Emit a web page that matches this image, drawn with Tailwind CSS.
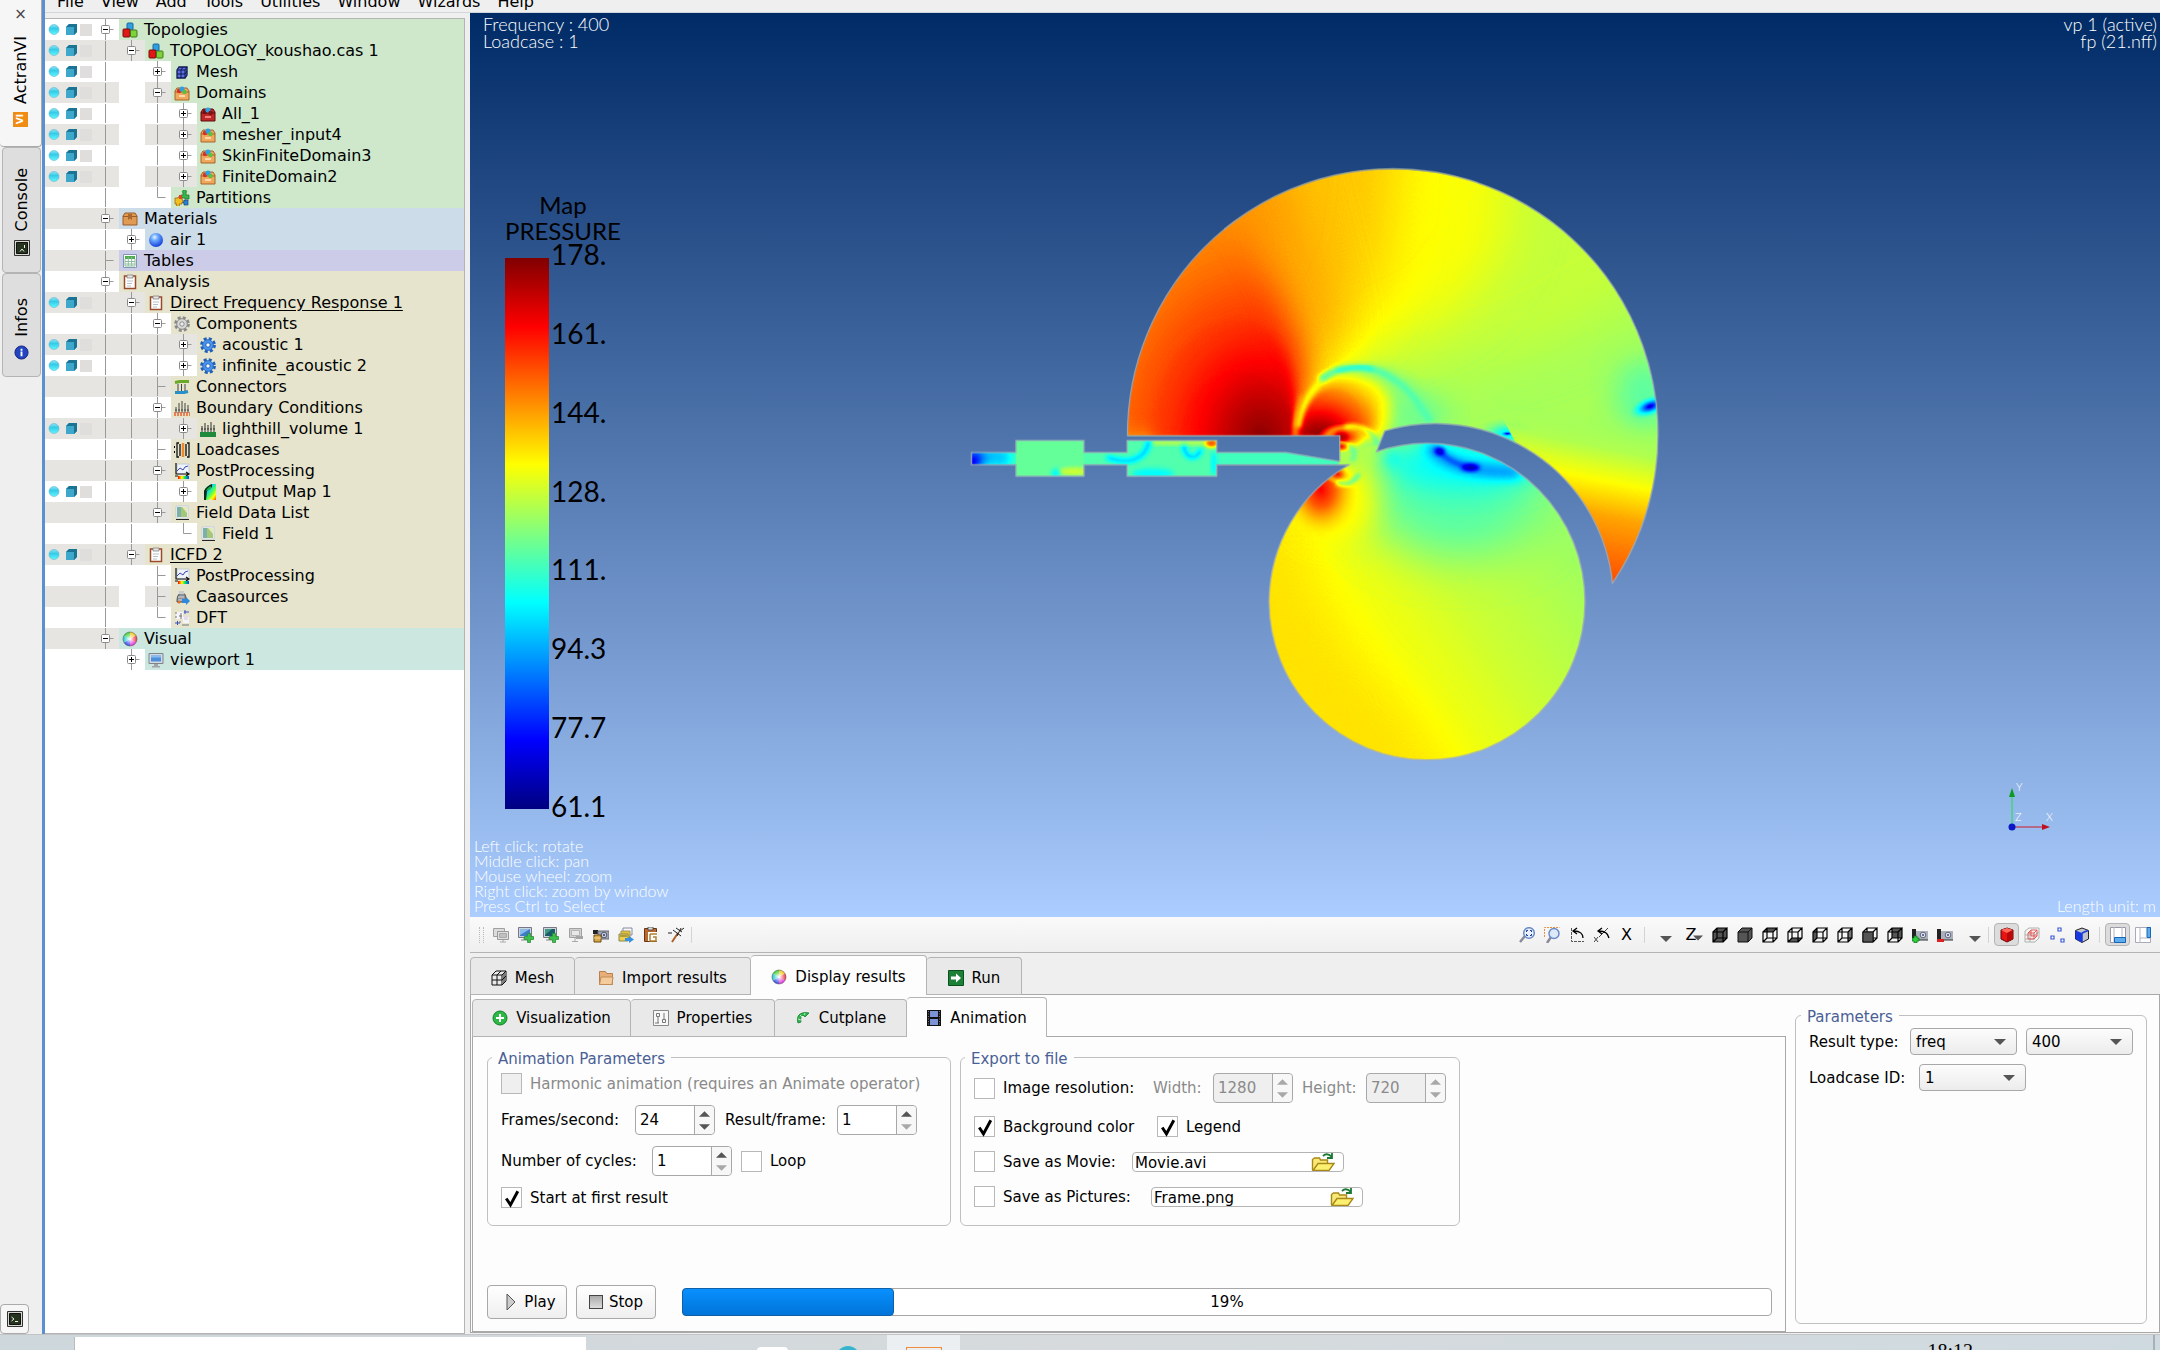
<!DOCTYPE html>
<html lang="en">
<head>
  <meta charset="utf-8" />
  <title>ActranVI</title>
  <meta name="viewport" content="width=device-width, initial-scale=1" />
  <script src="https://cdn.jsdelivr.net/npm/@tailwindcss/browser@4"></script>
</head>
<body class="h-screen flex flex-col overflow-hidden bg-[#efefef] text-black text-[15px] leading-5 font-['DejaVu_Sans',sans-serif]">

<!-- icon sprite -->
<svg class="absolute size-0" aria-hidden="true">
  <defs>
    <radialGradient id="gSphere" cx=".4" cy=".3" r=".7"><stop offset="0" stop-color="#e8f4ff"/><stop offset=".35" stop-color="#6aa8ff"/><stop offset="1" stop-color="#1440d8"/></radialGradient>
    <radialGradient id="gWhite" cx=".5" cy=".5" r=".5"><stop offset="0" stop-color="#fff"/><stop offset=".3" stop-color="#fff" stop-opacity=".7"/><stop offset="1" stop-color="#fff" stop-opacity="0"/></radialGradient>
    <linearGradient id="gCyan" x1="0" y1="0" x2="0" y2="1"><stop offset="0" stop-color="#8fe4f4"/><stop offset=".4" stop-color="#35cbe8"/><stop offset="1" stop-color="#5ff6ff"/></linearGradient>
    <linearGradient id="gRainbow" x1="0" y1="0" x2="1" y2="0"><stop offset="0" stop-color="#f00"/><stop offset=".35" stop-color="#ff0"/><stop offset=".65" stop-color="#0d6"/><stop offset="1" stop-color="#04f"/></linearGradient>
    <linearGradient id="gMap" x1="0" y1="0" x2="1" y2="1"><stop offset="0" stop-color="#0a2"/><stop offset=".35" stop-color="#0cf"/><stop offset=".6" stop-color="#5f5"/><stop offset=".8" stop-color="#ff0"/><stop offset="1" stop-color="#f40"/></linearGradient>
  </defs>
  <symbol id="blocks" viewBox="0 0 16 16"><rect x="5" y="1" width="6" height="7" rx="1" fill="#2f9fe0" stroke="#1668a0"/><rect x="1" y="7" width="7" height="8" rx="1" fill="#e01818" stroke="#7a0c0c"/><rect x="8.500" y="8" width="6.500" height="7" rx="1" fill="#7fd23a" stroke="#3c7a18"/></symbol>
  <symbol id="mesh" viewBox="0 0 16 16"><path d="M3 6l2-3h8v8l-2 3H3z" fill="#5a70e0" stroke="#101850" stroke-width="1.300"/><path d="M3 6h8l2-3M11 6v8M7 6v8M3 10h8l2-3M7 6l2-3" fill="none" stroke="#101850"/></symbol>
  <symbol id="box" viewBox="0 0 16 16"><path d="M1 6l2-3h10l2 3v9H1z" fill="#f0a85c" stroke="#a8642a"/><path d="M1 7h14" stroke="#a8642a"/><circle cx="5" cy="6" r="2.200" fill="#d83020"/><circle cx="8" cy="4" r="2.600" fill="#2f9fe0"/><circle cx="10.500" cy="7" r="2.200" fill="#5cc040"/><path d="M5 11h6" stroke="#ffd9a8" stroke-width="2"/></symbol>
  <symbol id="boxred" viewBox="0 0 16 16"><path d="M1 6l2-3h10l2 3v9H1z" fill="#c02828" stroke="#5c0c0c"/><path d="M1 7h14" stroke="#5c0c0c"/><circle cx="5" cy="6" r="2.200" fill="#701010"/><circle cx="8" cy="4" r="2.600" fill="#2f9fe0"/><circle cx="10.500" cy="7" r="2.200" fill="#801414"/><path d="M5 11h6" stroke="#f08080" stroke-width="2"/></symbol>
  <symbol id="puzzle" viewBox="0 0 16 16"><path d="M7 5h2V3a2 2 0 1 1 3 0v2h3v4h-4V8H7z" fill="#35b84a" stroke="#1a6a28" stroke-width=".7"/><path d="M1 8h3V7h4v3h1v2H8v2H5a1.500 1.500 0 1 1-2 0H1z" fill="#f0c020" stroke="#9a5a10" stroke-width=".7"/><path d="M10 10h4v5h-4v-2H9v-1h1z" fill="#2880d0" stroke="#144880" stroke-width=".7"/><path d="M5 5h3v4H5z" fill="#d84828"/></symbol>
  <symbol id="package" viewBox="0 0 16 16"><path d="M1 5l2-3h10l2 3v9H1z" fill="#e09a54" stroke="#9a5c28"/><path d="M1 5.500h14" stroke="#9a5c28"/><path d="M6 3h4v6l-2-1.500L6 9z" fill="#a86830"/></symbol>
  <symbol id="sphere" viewBox="0 0 16 16"><circle cx="8" cy="8" r="7" fill="url(#gSphere)"/></symbol>
  <symbol id="table" viewBox="0 0 16 16"><path d="M1.500 1.500h13v13h-13z" fill="#fff" stroke="#7c98b4"/><path d="M3 3h10v3H3z" fill="#4cae4c"/><path d="M3 6v7h10V6M3 8.500h10M3 11h10M6.300 4v9M9.600 4v9" fill="none" stroke="#8cbc9c"/></symbol>
  <symbol id="clip" viewBox="0 0 16 16"><path d="M2.500 2h11v12.500h-11z" fill="#fff" stroke="#9a4a28" stroke-width="1.500"/><path d="M5 1h6v3H5z" fill="#e4e4e4" stroke="#777" stroke-width=".7"/><path d="M5 7h6M5 9.500h5M5 12h4" stroke="#b4c0c8"/></symbol>
  <symbol id="gear" viewBox="0 0 16 16"><circle cx="8" cy="8" r="6.500" fill="none" stroke="#8a8a8a" stroke-width="2.800" stroke-dasharray="3 2.100"/><circle cx="8" cy="8" r="5.300" fill="#d8d8d8" stroke="#8a8a8a"/><circle cx="8" cy="8" r="2.200" fill="#eee" stroke="#8a8a8a"/></symbol>
  <symbol id="gearblue" viewBox="0 0 16 16"><circle cx="8" cy="8" r="6.500" fill="none" stroke="#1f5fb8" stroke-width="2.800" stroke-dasharray="3 2.100"/><circle cx="8" cy="8" r="5.300" fill="#4a94ec" stroke="#2a6cc8"/><circle cx="8" cy="8" r="2.200" fill="#fff" stroke="#1f5fb8"/></symbol>
  <symbol id="conn" viewBox="0 0 16 16"><path d="M1 3.500l5-1h9" fill="none" stroke="#6aa828" stroke-width="3"/><path d="M1 13.500h9l4-1" fill="none" stroke="#2890c8" stroke-width="3"/><path d="M4 5v7M7.500 5v7M11 5v7" stroke="#444"/></symbol>
  <symbol id="bc" viewBox="0 0 16 16"><path d="M2 7v6M5 3v10M8 1v12M11 3v10M14 5v8" stroke="#444"/><path d="M1 10h2M4 10h2M7 10h2M10 10h2M13 10h2" stroke="#444"/><path d="M0 13h16M0 15h16" stroke="#e8602c" stroke-width="1.500" stroke-dasharray="2 1"/></symbol>
  <symbol id="light" viewBox="0 0 16 16"><path d="M0 11h16v5H0z" fill="#1f8a3c"/><path d="M2 5v6M5 2v9M8 4v7M11 1v10M14 4v7" stroke="#333"/><path d="M1 8h2M4 8h2M7 8h2M10 8h2M13 8h2" stroke="#333"/></symbol>
  <symbol id="load" viewBox="0 0 16 16"><path d="M0 5h1M0 10h1" stroke="#000" stroke-width="2"/><path d="M5 1H3v14h2M13 1h2v14h-2" fill="none" stroke="#111" stroke-width="1.300"/><path d="M6 2v12M12 2v12" stroke="#555" stroke-width="2"/><path d="M9 1v14" stroke="#f08828" stroke-width="2.500"/></symbol>
  <symbol id="post" viewBox="0 0 16 16"><path d="M3 1h12v10H3z" fill="#eef2fa" stroke="#b0b8c8" stroke-width=".6"/><path d="M2 0v11h13M1 13h3M12 9l3 2-3 2" fill="none" stroke="#111" stroke-width="1.200"/><path d="M3 8l3-3 3 2 2-3 3-1" fill="none" stroke="#3848b0"/><path d="M4 13h11v3H4z" fill="url(#gRainbow)"/></symbol>
  <symbol id="map" viewBox="0 0 16 16"><path d="M4 7c2-4 5-6 8-7h4v16h-4c-1-3-3 0-4 0H4z" fill="url(#gMap)"/><path d="M4 7c2-4 5-6 8-7v3L7 7l-1 9H4z" fill="#0a2a18"/><path d="M6 7c1-3 3-4 5-5v3z" fill="#18b040"/></symbol>
  <symbol id="field" viewBox="0 0 16 16"><path d="M2 1h12v12H2z" fill="#fff" stroke="#c4ccd8"/><path d="M3 2h10v10H3z" fill="#a4c878"/><path d="M3 2h4v10H3z" fill="#7cb0a8"/><path d="M8 2h5v6z" fill="#e4eab4"/><path d="M2 14.500h13" stroke="#222"/></symbol>
  <symbol id="caa" viewBox="0 0 16 16"><path d="M3 13c0-5 1-8 4-9s5 2 5 6l-2 3z" fill="#8e9298" stroke="#4a4e54"/><path d="M5 2h5v3H5z" fill="#c8ccd0"/><path d="M4 8h6M4 11h6" stroke="#d8dce0"/><circle cx="5" cy="13" r="1.500" fill="#e07030"/><path d="M8 10h4V8l4 4-4 4v-2H8z" fill="#2f88dc"/></symbol>
  <symbol id="dft" viewBox="0 0 16 16"><path d="M2 2h7v7H2zM9 7h6v6H9z" fill="#f4f4fa"/><path d="M2 2v2M2 6v2M7 3v6M5 6h3M6 11v2M8 15h7" stroke="#777"/><path d="M10 2h3M11 0v4M13 2h2M1 13h5M3.500 11v4" stroke="#3850c0"/><path d="M10 6h4v4h-4z" fill="#e4dce4"/></symbol>
  <symbol id="wheel" viewBox="0 0 16 16"><path d="M8 8L8 1A7 7 0 0 1 14.100 4.500z" fill="#f4c818"/><path d="M8 8L14.100 4.500A7 7 0 0 1 14.100 11.500z" fill="#f03848"/><path d="M8 8L14.100 11.500A7 7 0 0 1 8 15z" fill="#e030d8"/><path d="M8 8L8 15A7 7 0 0 1 1.900 11.500z" fill="#3048e8"/><path d="M8 8L1.900 11.500A7 7 0 0 1 1.900 4.500z" fill="#20c8d0"/><path d="M8 8L1.900 4.500A7 7 0 0 1 8 1z" fill="#38d038"/><circle cx="8" cy="8" r="7" fill="url(#gWhite)" stroke="#666" stroke-width=".6"/></symbol>
  <symbol id="monitor" viewBox="0 0 16 16"><path d="M1 1.500h14v10H1z" fill="#d4d8e0" stroke="#7c848c"/><path d="M3 3.500h10v6H3z" fill="#4c90dc"/><path d="M3 3.500h10v2H3z" fill="#8cbcf0"/><path d="M6 12h4v2h2v1.500H4V14h2z" fill="#a0a4a8"/></symbol>
  <symbol id="console" viewBox="0 0 16 16"><path d="M.5.5h15v15H.5z" fill="#d8d8d0" stroke="#333"/><path d="M2.500 2.500h11v11h-11z" fill="#26331f" stroke="#111"/><path d="M4.500 6l2.500 2-2.500 2M8 10.500h3" fill="none" stroke="#e8f0e0"/></symbol>

  <!-- viewport toolbar -->
  <symbol id="mons" viewBox="0 0 16 16"><path d="M.5 1.500h11v8H.5z" fill="#dcdcdc" stroke="#a0a0a0"/><path d="M4.500 4.500h11v8h-11z" fill="#e0e0e0" stroke="#999"/><path d="M6.500 6.500h7v4h-7z" fill="#c0c0c0" stroke="#aaa"/><path d="M7 15h6M10 13v2" stroke="#aaa"/></symbol>
  <symbol id="monadd" viewBox="0 0 16 16"><path d="M.5.5h13v10H.5z" fill="#ccd4dc" stroke="#778"/><path d="M2 2h10v7H2z" fill="#3c7cc8"/><path d="M2 2h10L2 8z" fill="#8cbcec"/><path d="M3 13h6M6 11v2" stroke="#888"/><path d="M9.500 6.500h3v3h3v3h-3v3h-3v-3h-3v-3h3z" fill="#3cc04c" stroke="#289038" stroke-width=".8"/></symbol>
  <symbol id="monadd2" viewBox="0 0 16 16"><path d="M.5.5h13v10H.5z" fill="#ccd4dc" stroke="#778"/><path d="M2 2h10v7H2z" fill="#1c5c68"/><path d="M2 2h7L2 8z" fill="#3c9c88"/><path d="M3 13h6M6 11v2" stroke="#888"/><path d="M9.500 6.500h3v3h3v3h-3v3h-3v-3h-3v-3h3z" fill="#3cc04c" stroke="#289038" stroke-width=".8"/></symbol>
  <symbol id="mondel" viewBox="0 0 16 16"><path d="M1.500 1.500h12v9h-12z" fill="#d0d0d0" stroke="#a0a0a0"/><path d="M3.500 3.500h8v5h-8z" fill="#e8e8e8" stroke="#b4b4b4"/><path d="M4 14.500h6M7 11v3" stroke="#aaa"/><path d="M8 9h7v3H8z" fill="#a4a4a4"/></symbol>
  <symbol id="cam" viewBox="0 0 16 16"><path d="M0 3h5v4H0z" fill="#222"/><path d="M5 4h11v8H5z" fill="#9ca4b4" stroke="#667"/><circle cx="11" cy="8" r="2.800" fill="#c8d0e8" stroke="#556"/><circle cx="11" cy="8" r="1" fill="#335"/><path d="M1 8h7v7H1z" fill="#d8a848" stroke="#6a4a10"/><path d="M1 11h7" stroke="#f4d898"/></symbol>
  <symbol id="copyimg" viewBox="0 0 16 16"><path d="M5 1h9v7H5z" fill="#f8f8f8" stroke="#88a"/><path d="M3 4h9v7H3z" fill="#e8c030" stroke="#996"/><path d="M1 7h9v7H1z" fill="#f0d048" stroke="#885"/><path d="M2 9h7" stroke="#6a6a20"/><path d="M7 11h4V9l5 3.500L11 16v-2H7z" fill="#3890e0"/></symbol>
  <symbol id="paste" viewBox="0 0 16 16"><path d="M1.500 1.500h12v13h-12z" fill="#b86a30" stroke="#6c3410"/><path d="M5 0h5v3H5z" fill="#ddd" stroke="#444" stroke-width=".8"/><path d="M5 5h9v9H5z" fill="#fff"/><path d="M7 7h7M7 7v7h6v-4h-3" fill="none" stroke="#b08030" stroke-width="1.500"/></symbol>
  <symbol id="probe" viewBox="0 0 16 16"><path d="M4 15l6-9" stroke="#b06028" stroke-width="2"/><path d="M0 6h4M5 3l8 6M8 1l6 4M9 9l4-8M12 4l4-3" stroke="#222"/></symbol>
  <symbol id="zoomfit" viewBox="0 0 16 16"><path d="M1 15l5-6" stroke="#889" stroke-width="2.400"/><circle cx="10" cy="6" r="5.300" fill="#e8f0ff" stroke="#6a8cc8" stroke-width="1.500"/><path d="M7.500 5V3.500H9M11 3.500h1.500V5M12.500 7v1.500H11M9 8.500H7.500V7" fill="none" stroke="#203c90"/></symbol>
  <symbol id="zoombox" viewBox="0 0 16 16"><path d="M.5 10V.5h15" fill="none" stroke="#e89040" stroke-dasharray="2 1"/><path d="M3 16l4-6" stroke="#889" stroke-width="2.400"/><circle cx="10" cy="6.500" r="5" fill="#dde8f8" stroke="#6a8cc8" stroke-width="1.500"/></symbol>
  <symbol id="axrot" viewBox="0 0 16 16"><path d="M2.500 1v13.500H15" fill="none" stroke="#555" stroke-dasharray="3 1"/><path d="M14 11c0-4-3-7-9-7M8 1L4 4l4 3" fill="none" stroke="#000" stroke-width="1.300"/></symbol>
  <symbol id="xrot" viewBox="0 0 16 16"><path d="M0 10l4 5M4 10l-4 5M5 10l9-9" stroke="#444"/><path d="M15 11c-1-5-4-7-10-7M8 1L4 4l4 3" fill="none" stroke="#000" stroke-width="1.300"/></symbol>
  <symbol id="cube" viewBox="0 0 16 16"><path d="M1 5h10v10H1zM1 5l4-4h10l-4 4M15 1v10l-4 4M5 1v10h10M5 11l-4 4" fill="none" stroke="#000" stroke-width="1.200"/></symbol>
  <symbol id="camadd" viewBox="0 0 16 16"><path d="M0 2h4v10H0z" fill="#222"/><path d="M4 4h12v9H4z" fill="#aab0bc"/><path d="M4 13h12" stroke="#333"/><circle cx="11" cy="8" r="2.800" fill="#dde4f4" stroke="#667"/><circle cx="11" cy="8" r="1" fill="#447"/><path d="M2 9h3v2h2v3H5v2H2v-2H0v-3h2z" fill="#2cd03c" stroke="#0c6c18" stroke-width=".7"/></symbol>
  <symbol id="camdel" viewBox="0 0 16 16"><path d="M0 2h4v10H0z" fill="#222"/><path d="M4 4h12v9H4z" fill="#aab0bc"/><path d="M4 13h12" stroke="#333"/><circle cx="11" cy="8" r="2.800" fill="#dde4f4" stroke="#667"/><circle cx="11" cy="8" r="1" fill="#447"/><path d="M0 12h7v3H0z" fill="#e02020"/></symbol>
  <symbol id="redcube" viewBox="0 0 16 16"><path d="M8 1l6 2v9l-6 3-6-3V3z" fill="#e81414" stroke="#5c0808"/><path d="M8 1l6 2-6 3-6-3z" fill="#ff6a5a"/><path d="M8 6l6-3v9l-6 3z" fill="#b80808"/></symbol>
  <symbol id="wirecube" viewBox="0 0 16 16"><path d="M1 4l4-3h10v10l-4 4H1zM1 8h10l4-3M6 4v11M1 12h10" fill="none" stroke="#a8b4b0"/><path d="M4 6h6v6H4zM4 6l3-3h6v6l-3 3M10 6l3-3M7 3v6h6" fill="none" stroke="#e85858"/></symbol>
  <symbol id="points" viewBox="0 0 16 16"><path d="M9 1h3v3H9zM2 9h3v3H2zM12 12h3v3h-3z" fill="#fff" stroke="#3c58d8" stroke-width="1.200"/></symbol>
  <symbol id="bluecube" viewBox="0 0 16 16"><path d="M8 1l6.500 2.500V12L8 15.500 1.500 12V3.500z" fill="#c0c4c8" stroke="#222"/><path d="M1.500 3.500L8 6v9.500L1.500 12z" fill="#1838e0"/><path d="M8 6l6-2.500M8 6v9" stroke="#1838e0" stroke-width="1.500"/></symbol>
  <symbol id="paneb" viewBox="0 0 16 16"><path d="M.5.5h15v15H.5z" fill="#fff" stroke="#99a"/><path d="M4 0v16M12 0v10" stroke="#b4b8c4"/><path d="M4.500 10.500h11v5h-11z" fill="#5cacf0" stroke="#1c64b0"/></symbol>
  <symbol id="paner" viewBox="0 0 16 16"><path d="M.5.500h15v15H.5z" fill="#fff" stroke="#aab"/><path d="M5 0v16M5 11h10" stroke="#b4b8c4"/><path d="M12 .5h3.500v10H12z" fill="#5cacf0" stroke="#1c64b0"/></symbol>

  <!-- tabs and file fields -->
  <symbol id="meshtab" viewBox="0 0 16 16"><path d="M1 5h10v10H1zM1 5l4-4h10l-4 4M15 1v10l-4 4M6 5v10M1 10h10l4-4M6 5l4-4M13 3v10" fill="none" stroke="#111"/></symbol>
  <symbol id="folder" viewBox="0 0 16 16"><path d="M1.500 1.500h6l1 2h6v11h-13z" fill="#e8b078" stroke="#b8804c"/><path d="M3 7h12l-1 7.500H1.500z" fill="#f4cc9c" stroke="#c08c58"/></symbol>
  <symbol id="run" viewBox="0 0 16 16"><path d="M.5.500h15v15H.5z" fill="#1c8038" stroke="#0c5020"/><path d="M3 6.500h5V3.500l5 4.500-5 4.500v-3H3z" fill="#fff"/></symbol>
  <symbol id="plus" viewBox="0 0 16 16"><circle cx="8" cy="8" r="7" fill="#2cb844" stroke="#128028"/><path d="M8 4v8M4 8h8" stroke="#fff" stroke-width="2"/></symbol>
  <symbol id="props" viewBox="0 0 16 16"><path d="M.5.500h15v15H.5z" fill="#f8f8f8" stroke="#888"/><path d="M3.500 3.500h3v3h-3zM5 7v6M11 3v6M9.500 9.500h3v3h-3zM2 13h4" fill="none" stroke="#777"/></symbol>
  <symbol id="cut" viewBox="0 0 16 16"><path d="M3 13C1 7 4 1 14 3L10 7 8 5c-2 1-3 4-2 7z" fill="#30b84c" stroke="#187830" stroke-width=".8"/><path d="M3 9l3 1M5 5l2 2M10 3l-1 2" stroke="#b8ecc0"/></symbol>
  <symbol id="film" viewBox="0 0 16 16"><path d="M1 0h14v16H1z" fill="#111"/><path d="M4 1h8v6H4zM4 9h8v6H4z" fill="#7c94d4"/><path d="M2.500 1v15M13.500 1v15" stroke="#778" stroke-dasharray="1 1.500"/></symbol>
  <symbol id="open" viewBox="0 0 24 18"><path d="M1.500 17V6.500l2-1.500h5l1 2h7v4" fill="#f8e878" stroke="#a88818" stroke-width="1.400"/><path d="M2 17.500l5-7h16l-5 7z" fill="#fcf070" stroke="#a88818" stroke-width="1.400"/><path d="M12 3c3-3 6-2 9 1M21 0v5h-5" fill="none" stroke="#1a7a34" stroke-width="1.800"/></symbol>
  <symbol id="check" viewBox="0 0 20 20"><path d="M5 11l4 6L16 4" fill="none" stroke="#000" stroke-width="2.800"/></symbol>
  <symbol id="up" viewBox="0 0 12 6"><path d="M0 6L6 0l6 6z" fill="currentColor"/></symbol>
  <symbol id="down" viewBox="0 0 12 6"><path d="M0 0h12L6 6z" fill="currentColor"/></symbol>
</svg>

<div class="flex flex-1 min-h-0">
  <!-- dock tabs -->
  <nav class="w-[42px] shrink-0 flex flex-col">
    <button class="h-[147px] flex flex-col items-center border border-l-0 border-t-0 border-[#aaa] rounded-b bg-[#f6f6f6] pt-1">
      <span class="text-[#444]">×</span>
      <span class="[writing-mode:vertical-rl] rotate-180 mt-3 text-[16px]">ActranVI</span>
      <span class="grid place-items-center size-[15px] mt-2 bg-[#f08c14] text-white text-[9px] font-bold leading-3"><span class="-rotate-90">VI</span></span>
    </button>
    <button class="h-[126px] w-[39px] ml-[2px] flex flex-col items-center justify-end gap-2 pb-4 border border-[#b4b4b4] rounded bg-[#dedede]">
      <span class="[writing-mode:vertical-rl] rotate-180 text-[16px]">Console</span>
      <svg class="size-4 -rotate-90"><use href="#console"/></svg>
    </button>
    <button class="h-[104px] w-[39px] ml-[2px] flex flex-col items-center justify-end gap-2 pb-4 border border-[#b4b4b4] rounded bg-[#dedede]">
      <span class="[writing-mode:vertical-rl] rotate-180 text-[16px]">Infos</span>
      <svg class="size-[15px]" viewBox="0 0 16 16"><circle cx="8" cy="8" r="7" fill="#2344c0" stroke="#14247c"/><path d="M8 7v5M8 4v2" stroke="#fff" stroke-width="2"/></svg>
    </button>
    <button class="mt-auto w-[29px] h-[30px] grid place-items-center border border-[#aaa] rounded-sm bg-[#f6f6f6]" aria-label="Console"><svg class="size-4"><use href="#console"/></svg></button>
  </nav>

  <div class="flex-1 min-w-0 flex flex-col border-l-[3px] border-[#5a8fd0]">
    <header class="h-[13px] shrink-0 overflow-hidden flex items-end border-b border-[#cfd6dc] pl-3 gap-[17px] text-[16px]">
      <a href="#file">File</a><a href="#view">View</a><a href="#add">Add</a><a href="#tools">Tools</a><a href="#utilities">Utilities</a><a href="#window">Window</a><a href="#wizards">Wizards</a><a href="#help">Help</a>
    </header>

    <div class="flex-1 min-h-0 flex">
      <ul id="tree" class="w-[420px] shrink-0 mt-[5px] mr-[5px] bg-white border-t border-r border-b border-[#b4b4b4] text-[16px]"></ul>

      <main class="flex-1 min-w-0 flex flex-col">
        <!-- 3D viewport -->
        <section class="relative flex-1 min-h-0 flex items-center justify-center bg-linear-to-b from-[#002b66] to-[#abcdff] overflow-hidden text-white text-[18px] leading-[17px] font-[Lato,sans-serif] font-light">
          <svg class="w-[720px] h-[630px]" viewBox="955 150 720 630">
            <defs>
              <path id="duct" d="M365 711A577.500 661 0 1 1 1421 1078A388 443 0 0 0 925 699L907 751A344 394 0 0 1 1017 730A344 394 0 0 1 1361 1124A344 394 0 0 1 1017 1518A344 394 0 0 1 673 1124A344 394 0 0 1 848 783H559V812H364V783H270V812H122V783H25V753H122V723H270V753H364V723H559V753H710L827 775V711Z"/>
              <clipPath id="cDuct"><use href="#duct"/></clipPath>
              <clipPath id="cDome"><path d="M300 0H1568V1100H1400L1230 790L1040 715L880 740L830 720V711H300Z"/></clipPath>
              <clipPath id="cLow"><path d="M600 1568V860L846 782L860 760L905 745L1040 715L1300 820L1400 1120V1568Z"/></clipPath>
              <!-- scalar field (grey) to rainbow -->
              <filter id="jet" x="0" y="0" width="1568" height="1568" filterUnits="userSpaceOnUse" color-interpolation-filters="sRGB">
                <feComponentTransfer>
                  <feFuncR type="table" tableValues="0 0 0 0 .5 1 1 1 .5"/>
                  <feFuncG type="table" tableValues="0 0 .5 1 1 1 .5 0 0"/>
                  <feFuncB type="table" tableValues=".5 1 1 1 .5 0 0 0 0"/>
                </feComponentTransfer>
              </filter>
              <filter id="b60" x="-50%" y="-50%" width="200%" height="200%" color-interpolation-filters="sRGB"><feGaussianBlur stdDeviation="60"/></filter>
              <filter id="b30" x="-50%" y="-50%" width="200%" height="200%" color-interpolation-filters="sRGB"><feGaussianBlur stdDeviation="32"/></filter>
              <filter id="b12" x="-50%" y="-50%" width="200%" height="200%" color-interpolation-filters="sRGB"><feGaussianBlur stdDeviation="13"/></filter>
              <filter id="b5" x="-50%" y="-50%" width="200%" height="200%" color-interpolation-filters="sRGB"><feGaussianBlur stdDeviation="5"/></filter>
              <radialGradient id="rMain" gradientUnits="userSpaceOnUse" cx="0" cy="0" r="1" gradientTransform="translate(655 715) scale(400 560)">
                <stop offset="0" stop-color="#fcfcfc"/><stop offset=".15" stop-color="#f0f0f0"/><stop offset=".3" stop-color="#e2e2e2"/><stop offset=".5" stop-color="#d3d3d3"/><stop offset=".75" stop-color="#c5c5c5"/><stop offset="1" stop-color="#bababa"/>
              </radialGradient>
              <radialGradient id="rLobe" gradientUnits="userSpaceOnUse" cx="0" cy="0" r="1" gradientTransform="translate(782 718) scale(175 175)">
                <stop offset="0" stop-color="#fff"/><stop offset=".22" stop-color="#f0f0f0"/><stop offset=".45" stop-color="#d6d6d6"/><stop offset=".7" stop-color="#bcbcbc"/><stop offset="1" stop-color="#9c9c9c"/>
              </radialGradient>
              <radialGradient id="rSpot"><stop offset="0" stop-color="#e0e0e0"/><stop offset=".35" stop-color="#c8c8c8"/><stop offset=".65" stop-color="#b0b0b0" stop-opacity=".8"/><stop offset="1" stop-color="#a0a0a0" stop-opacity="0"/></radialGradient>
              <radialGradient id="rCold"><stop offset="0" stop-color="#101010"/><stop offset=".3" stop-color="#404040"/><stop offset="1" stop-color="#787878" stop-opacity="0"/></radialGradient>
              <linearGradient id="lTail" gradientUnits="userSpaceOnUse" x1="1500" y1="680" x2="1410" y2="1080"><stop offset="0" stop-color="#868686" stop-opacity="0"/><stop offset=".2" stop-color="#8c8c8c"/><stop offset=".38" stop-color="#9e9e9e"/><stop offset=".6" stop-color="#b6b6b6"/><stop offset="1" stop-color="#cdcdcd"/></linearGradient>
              <linearGradient id="lLow" gradientUnits="userSpaceOnUse" x1="690" y1="1250" x2="1280" y2="900"><stop offset="0" stop-color="#a9a9a9"/><stop offset=".3" stop-color="#9f9f9f"/><stop offset=".6" stop-color="#939393"/><stop offset="1" stop-color="#888"/></linearGradient>
            </defs>
            <g transform="translate(960 150) scale(.4592 .4018)">
              <g clip-path="url(#cDuct)">
                <g filter="url(#jet)">
                  <rect width="1568" height="1568" fill="#8a8a8a"/>
                  <!-- upper volume -->
                  <g clip-path="url(#cDome)">
                    <path d="M300-200H1600L1500 350L1300 480L1050 560L800 640L600 800H200Z" fill="#919191" filter="url(#b60)"/>
                    <path d="M200-200H1200L1180 250L1080 400L900 500L780 600L735 720H200Z" fill="#9f9f9f" filter="url(#b60)"/>
                    <path d="M200-80H960L930 250L880 400L800 500L740 600L730 720H200Z" fill="#aeaeae" filter="url(#b60)"/>
                    <path d="M200 720V400L430 0L700 30L760 300L790 440L750 560L727 640V720Z" fill="#bababa" filter="url(#b60)"/>
                    <path d="M300 720V500L430 180L600 160L690 350L730 480L740 560L727 640V720Z" fill="url(#rMain)" filter="url(#b30)"/>
                    <path d="M420 720C430 520 520 440 610 430C700 440 735 560 726 720Z" fill="url(#rMain)" filter="url(#b12)"/>
                    <path d="M480 713C500 560 600 510 680 590C718 630 726 670 727 713Z" fill="url(#rMain)" filter="url(#b5)"/>
                    <ellipse cx="905" cy="670" rx="125" ry="130" fill="#848484" filter="url(#b12)"/>
                    <path d="M760 713C760 630 800 556 860 560C935 570 960 640 925 713Z" fill="#a2a2a2" filter="url(#b12)"/>
                    <path d="M733 713C742 630 770 575 830 572C895 580 930 640 890 713Z" fill="url(#rLobe)" filter="url(#b12)"/>
                    <path d="M737 713C750 640 775 600 820 600C870 610 880 660 860 713Z" fill="url(#rLobe)" filter="url(#b5)"/>
                    <path d="M735 690C741 630 775 565 860 520" fill="none" stroke="#9c9c9c" stroke-width="14" filter="url(#b5)"/>
                    <path d="M728 713C731 670 735 640 745 610" fill="none" stroke="#b4b4b4" stroke-width="8" filter="url(#b5)"/>
                    <path d="M785 572C830 532 900 530 950 575C990 605 1000 640 1025 675" fill="none" stroke="#747474" stroke-width="16" filter="url(#b5)"/>
                    <path d="M820 550C850 540 880 538 900 546" fill="none" stroke="#5c5c5c" stroke-width="6" filter="url(#b5)"/>
                    <ellipse cx="1010" cy="655" rx="50" ry="45" fill="#747474" opacity=".7" filter="url(#b30)"/>
                    <ellipse cx="1490" cy="610" rx="60" ry="90" fill="#767676" filter="url(#b30)"/>
                    <ellipse cx="1503" cy="638" rx="52" ry="28" fill="url(#rCold)" transform="rotate(-25 1503 638)"/>
                    <ellipse cx="1192" cy="706" rx="70" ry="42" fill="url(#rCold)" opacity=".45"/>
                    <ellipse cx="1192" cy="706" rx="20" ry="9" fill="url(#rCold)"/>
                    <path d="M1150 600H1568V1090H1380Z" fill="url(#lTail)"/>
                  </g>
                  <!-- lower volume -->
                  <g clip-path="url(#cLow)">
                    <rect x="600" y="700" width="800" height="868" fill="url(#lLow)"/>
                    <path d="M600 820L740 830L740 1000L760 1150L840 1300L960 1420L1050 1568H600Z" fill="#a6a6a6" filter="url(#b60)"/>
                    <ellipse cx="1080" cy="840" rx="190" ry="170" fill="#747474" filter="url(#b60)"/>
                    <ellipse cx="1100" cy="785" rx="160" ry="60" fill="#606060" filter="url(#b30)"/>
                    <ellipse cx="945" cy="770" rx="20" ry="22" fill="#646464" filter="url(#b12)"/>
                    <path d="M1020 735C1060 785 1110 800 1220 803" fill="none" stroke="#3c3c3c" stroke-width="24" filter="url(#b12)"/>
                    <path d="M1035 742C1055 765 1085 788 1120 790" fill="none" stroke="#2c2c2c" stroke-width="9" filter="url(#b5)"/>
                    <ellipse cx="1112" cy="790" rx="20" ry="8" fill="#080808" filter="url(#b5)"/>
                    <ellipse cx="1045" cy="750" rx="10" ry="8" fill="#080808" filter="url(#b5)"/>
                    <ellipse cx="820" cy="870" rx="80" ry="100" fill="#a2a2a2" filter="url(#b30)"/>
                    <ellipse cx="786" cy="845" rx="85" ry="125" fill="url(#rSpot)"/>
                    <ellipse cx="822" cy="806" rx="28" ry="26" fill="url(#rSpot)"/>
                    <path d="M820 828C845 835 862 825 868 805" fill="none" stroke="#606060" stroke-width="7" filter="url(#b5)"/>
                  </g>
                  <!-- slit mouth -->
                  <path d="M829 720H890V790H829Z" fill="#8c8c8c" filter="url(#b12)"/>
                  <ellipse cx="836" cy="714" rx="56" ry="34" fill="url(#rSpot)"/>
                  <ellipse cx="830" cy="714" rx="15" ry="13" fill="#f0f0f0" filter="url(#b5)"/>
                  <ellipse cx="830" cy="738" rx="24" ry="16" fill="url(#rSpot)"/>
                  <path d="M838 688C875 680 905 705 910 735M845 732C862 745 862 760 852 775" fill="none" stroke="#666" stroke-width="5" filter="url(#b5)"/>
                  <!-- inlet chambers -->
                  <path d="M0 715H559V820H0Z" fill="#747474"/><path d="M559 745H825V784H559Z" fill="#707070"/>
                  <path d="M0 740H110V790H0Z" fill="#505050" filter="url(#b12)"/><path d="M5 760L50 752L35 800H5Z" fill="#101010" filter="url(#b12)"/>
                  <path d="M122 723H270V812H122Z" fill="#797979"/>
                  <ellipse cx="250" cy="800" rx="35" ry="10" fill="#949494" filter="url(#b5)"/><ellipse cx="208" cy="804" rx="8" ry="10" fill="#5c5c5c" filter="url(#b5)"/>
                  <path d="M320 765C370 785 405 770 412 723" fill="none" stroke="#505050" stroke-width="12" filter="url(#b5)"/>
                  <path d="M488 723C482 765 515 780 524 745" fill="none" stroke="#444" stroke-width="8" filter="url(#b5)"/>
                  <path d="M420 723H559V733H420Z" fill="#969696" filter="url(#b5)"/><ellipse cx="548" cy="730" rx="14" ry="10" fill="#d0d0d0" filter="url(#b5)"/>
                  <ellipse cx="420" cy="805" rx="45" ry="12" fill="#606060" filter="url(#b5)"/><ellipse cx="553" cy="780" rx="5" ry="30" fill="#585858" filter="url(#b5)"/>
                </g>
              </g>
              <use href="#duct" fill="none" stroke="#a4aeb8" stroke-width="2.500"/>
            </g>
          </svg>

          <div class="absolute left-[13px] top-[3px]">Frequency : 400<br/>Loadcase : 1</div>
          <div class="absolute right-[3px] top-[3px] text-right">vp 1 (active)<br/>fp (21.nff)</div>
          <div class="absolute left-1 bottom-1 text-[16px] leading-[15px]">Left click: rotate<br/>Middle click: pan<br/>Mouse wheel: zoom<br/>Right click: zoom by window<br/>Press Ctrl to Select</div>
          <div class="absolute right-1 bottom-1 text-[16px] leading-[15px]">Length unit: m</div>

          <!-- colour legend -->
          <div class="absolute left-[35px] top-[179px] text-black font-normal">
            <div class="text-center text-[24px] leading-[26px]">Map<br/>PRESSURE</div>
            <div class="flex -mt-1">
              <div class="w-11 h-[551px] mt-[18px] bg-[linear-gradient(#800000,#f00_12.5%,#ff0_37.5%,#0ff_62.5%,#00f_87.5%,#000080)]"></div>
              <div class="h-[580px] pl-[2px] flex flex-col justify-between text-[28px] leading-7">
                <span>178.</span><span>161.</span><span>144.</span><span>128.</span><span>111.</span><span>94.3</span><span>77.7</span><span>61.1</span>
              </div>
            </div>
          </div>

          <svg class="absolute right-[104px] bottom-[82px] w-[50px] h-[54px] text-[11px]" viewBox="0 0 50 54"><path d="M6 46V10" stroke="#1ee04a"/><path d="M3 16L6 7l3 9z" fill="#0c9a20"/><path d="M6 46h32" stroke="#d01828"/><path d="M36 43l8 3-8 3z" fill="#c01020"/><circle cx="6" cy="46" r="3.500" fill="#0818c8"/><text x="10" y="10" fill="#fff">Y</text><text x="9" y="40" fill="#fff">Z</text><text x="40" y="40" fill="#fff">X</text></svg>
        </section>

        <!-- viewport toolbar -->
        <div class="h-9 shrink-0 flex items-center justify-between bg-linear-to-b from-[#fafafa] to-[#efefef] border-b border-[#b4b4b4] pl-[9px] pr-[5px] text-[#555] text-[16px]">
          <div class="flex items-center">
            <span class="w-[5px] h-4 mr-[4px] border-x border-dotted border-[#bbb]"></span>
            <button class="w-[25px] grid place-items-center" aria-label="Viewports"><svg class="size-4"><use href="#mons"/></svg></button>
            <button class="w-[25px] grid place-items-center" aria-label="Add viewport"><svg class="size-4"><use href="#monadd"/></svg></button>
            <button class="w-[25px] grid place-items-center" aria-label="Add linked viewport"><svg class="size-4"><use href="#monadd2"/></svg></button>
            <button class="w-[25px] grid place-items-center" aria-label="Delete viewport"><svg class="size-4"><use href="#mondel"/></svg></button>
            <button class="w-[25px] grid place-items-center" aria-label="Snapshot"><svg class="size-4"><use href="#cam"/></svg></button>
            <button class="w-[25px] grid place-items-center" aria-label="Copy image"><svg class="size-4"><use href="#copyimg"/></svg></button>
            <button class="w-[25px] grid place-items-center" aria-label="Paste"><svg class="size-4"><use href="#paste"/></svg></button>
            <button class="w-[25px] grid place-items-center" aria-label="Probe"><svg class="size-4"><use href="#probe"/></svg></button>
            <span class="w-px h-4 ml-[3px] bg-[#d4d4d4]"></span>
          </div>
          <div class="flex items-center">
            <button class="w-[25px] grid place-items-center" aria-label="Zoom fit"><svg class="size-4"><use href="#zoomfit"/></svg></button>
            <button class="w-[25px] grid place-items-center" aria-label="Zoom box"><svg class="size-4"><use href="#zoombox"/></svg></button>
            <button class="w-[25px] grid place-items-center" aria-label="Rotate axes"><svg class="size-4"><use href="#axrot"/></svg></button>
            <button class="w-[25px] grid place-items-center" aria-label="Rotate around X"><svg class="size-4"><use href="#xrot"/></svg></button>
            <button class="w-[25px] text-black">X</button>
            <span class="w-px h-4 mx-[5px] bg-[#d4d4d4]"></span>
            <button class="w-8 grid place-items-center pt-2" aria-label="Axis menu"><svg class="w-3 h-[6px]"><use href="#down"/></svg></button>
            <button class="w-[25px] flex items-end justify-center text-black">Z<svg class="w-[10px] h-[6px] mb-1 -ml-[3px] text-[#555]"><use href="#down"/></svg></button>
            <button class="w-[25px] grid place-items-center" aria-label="All faces"><svg class="size-4" viewBox="0 0 16 16"><path d="M1 5l4-4h10v10l-4 4H1z" fill="#555"/><use href="#cube"/></svg></button>
            <button class="w-[25px] grid place-items-center" aria-label="Solid"><svg class="size-4" viewBox="0 0 16 16"><path d="M1 5l4-4h10v10l-4 4H1zM1 5h10v10M11 5l4-4" fill="#555" stroke="#111"/></svg></button>
            <button class="w-[25px] grid place-items-center" aria-label="Top"><svg class="size-4" viewBox="0 0 16 16"><path d="M1 5l4-4h10l-4 4z" fill="#555"/><use href="#cube"/></svg></button>
            <button class="w-[25px] grid place-items-center" aria-label="Bottom"><svg class="size-4" viewBox="0 0 16 16"><path d="M1 15l4-4h10l-4 4z" fill="#555"/><use href="#cube"/></svg></button>
            <button class="w-[25px] grid place-items-center" aria-label="Left"><svg class="size-4" viewBox="0 0 16 16"><path d="M1 5l4-4v10l-4 4z" fill="#555"/><use href="#cube"/></svg></button>
            <button class="w-[25px] grid place-items-center" aria-label="Right"><svg class="size-4" viewBox="0 0 16 16"><path d="M11 5l4-4v10l-4 4z" fill="#777"/><use href="#cube"/></svg></button>
            <button class="w-[25px] grid place-items-center" aria-label="Front"><svg class="size-4" viewBox="0 0 16 16"><use href="#cube"/><path d="M1 5h10v10H1z" fill="#555" stroke="#111"/></svg></button>
            <button class="w-[25px] grid place-items-center" aria-label="Back"><svg class="size-4" viewBox="0 0 16 16"><path d="M5 1h10v10H5z" fill="#555"/><use href="#cube"/></svg></button>
            <button class="w-[25px] grid place-items-center" aria-label="Add camera"><svg class="size-4"><use href="#camadd"/></svg></button>
            <button class="w-[25px] grid place-items-center" aria-label="Remove camera"><svg class="size-4"><use href="#camdel"/></svg></button>
            <button class="w-[26px] flex justify-end pr-[2px] pt-2" aria-label="Camera menu"><svg class="w-3 h-[6px]"><use href="#down"/></svg></button>
            <span class="w-px h-4 mx-[5px] bg-[#d4d4d4]"></span>
            <button class="w-[25px] h-[23px] grid place-items-center border border-[#b4b4b4] rounded-sm bg-[#dcdcdc]" aria-label="Shaded"><svg class="size-4"><use href="#redcube"/></svg></button>
            <button class="w-[25px] grid place-items-center" aria-label="Wireframe"><svg class="size-4"><use href="#wirecube"/></svg></button>
            <button class="w-[25px] grid place-items-center" aria-label="Points"><svg class="size-4"><use href="#points"/></svg></button>
            <button class="w-[25px] grid place-items-center" aria-label="Edges"><svg class="size-4"><use href="#bluecube"/></svg></button>
            <span class="w-px h-4 mx-[5px] bg-[#d4d4d4]"></span>
            <button class="w-[25px] h-[23px] grid place-items-center border border-[#b4b4b4] rounded-sm bg-[#dcdcdc]" aria-label="Bottom panel"><svg class="size-4"><use href="#paneb"/></svg></button>
            <button class="w-[25px] grid place-items-center" aria-label="Right panel"><svg class="size-4"><use href="#paner"/></svg></button>
          </div>
        </div>

        <!-- main tabs -->
        <div class="shrink-0 flex items-end pt-[2px] relative -mb-px z-10">
          <button class="h-[38px] w-[105px] pt-[3px] flex items-center justify-center gap-2 border border-[#b4b4b4] rounded-t bg-[#e9e9e9]"><svg class="size-4"><use href="#meshtab"/></svg>Mesh</button>
          <button class="h-[38px] w-44 pt-[3px] flex items-center justify-center gap-2 border border-l-0 border-[#b4b4b4] rounded-t bg-[#e9e9e9]"><svg class="size-4"><use href="#folder"/></svg>Import results</button>
          <button class="h-10 w-44 pt-[3px] flex items-center justify-center gap-2 border border-b-0 border-l-0 border-[#b4b4b4] rounded-t bg-[#fdfdfd]"><svg class="size-4"><use href="#wheel"/></svg>Display results</button>
          <button class="h-[38px] w-[95px] pt-[3px] flex items-center justify-center gap-2 border border-l-0 border-[#b4b4b4] rounded-t bg-[#e9e9e9]"><svg class="size-4"><use href="#run"/></svg>Run</button>
        </div>

        <div class="shrink-0 h-[339px] mb-px border border-[#a8a8a8] bg-[#fdfdfd] flex">
          <div class="flex-1 min-w-0 flex flex-col pt-[2px] pl-px">
            <div class="flex items-end relative -mb-px z-10">
              <button class="h-[38px] w-[159px] flex items-center justify-center gap-2 border border-[#b4b4b4] rounded-t bg-[#e9e9e9]"><svg class="size-4"><use href="#plus"/></svg>Visualization</button>
              <button class="h-[38px] w-36 flex items-center justify-center gap-2 border border-l-0 border-[#b4b4b4] rounded-t bg-[#e9e9e9]"><svg class="size-4"><use href="#props"/></svg>Properties</button>
              <button class="h-[38px] w-33 flex items-center justify-center gap-2 border border-l-0 border-[#b4b4b4] rounded-t bg-[#e9e9e9]"><svg class="size-4"><use href="#cut"/></svg>Cutplane</button>
              <button class="h-10 w-35 flex items-center justify-center gap-2 border border-b-0 border-l-0 border-[#b4b4b4] rounded-t bg-[#fdfdfd]"><svg class="size-4"><use href="#film"/></svg>Animation</button>
            </div>
            <div class="flex-1 border border-[#a8a8a8] flex flex-col justify-between pt-2 pl-[14px] pr-[13px] pb-3">
              <div class="flex gap-[9px]">
                <fieldset class="w-[464px] h-[181px] border border-[#c0c0c0] rounded-md px-[13px] pt-1">
                  <legend class="px-[6px] pt-1 -ml-[9px] text-[#4a5f96]">Animation Parameters</legend>
                  <div class="flex flex-col gap-[11px]">
                    <div class="flex items-center gap-2 text-[#8a8a8a]">
                      <input id="harm" type="checkbox" disabled class="appearance-none size-[21px] border border-[#b8b8b8] bg-[#efefef]"/><label for="harm">Harmonic animation (requires an Animate operator)</label>
                    </div>
                    <div class="flex items-center">
                      <label for="fps" class="w-[134px]">Frames/second:</label>
                      <span class="flex w-20 h-[30px] border border-[#a8a8a8] rounded bg-white">
                        <input id="fps" type="number" value="24" class="w-0 flex-1 pl-1 [appearance:textfield]"/>
                        <span class="w-5 flex flex-col items-center justify-center gap-[7px] border-l border-[#a8a8a8] bg-[#f7f7f7] rounded-r text-[#555]"><svg class="w-[11px] h-[6px]"><use href="#up"/></svg><svg class="w-[11px] h-[6px]"><use href="#down"/></svg></span>
                      </span>
                      <label for="rpf" class="w-[122px] pl-[10px]">Result/frame:</label>
                      <span class="flex w-20 h-[30px] border border-[#a8a8a8] rounded bg-white">
                        <input id="rpf" type="number" value="1" class="w-0 flex-1 pl-1 [appearance:textfield]"/>
                        <span class="w-5 flex flex-col items-center justify-center gap-[7px] border-l border-[#a8a8a8] bg-[#f7f7f7] rounded-r text-[#555]"><svg class="w-[11px] h-[6px]"><use href="#up"/></svg><svg class="w-[11px] h-[6px] text-[#a8a8a8]"><use href="#down"/></svg></span>
                      </span>
                    </div>
                    <div class="flex items-center">
                      <label for="cycles" class="w-[151px]">Number of cycles:</label>
                      <span class="flex w-20 h-[30px] border border-[#a8a8a8] rounded bg-white">
                        <input id="cycles" type="number" value="1" class="w-0 flex-1 pl-1 [appearance:textfield]"/>
                        <span class="w-5 flex flex-col items-center justify-center gap-[7px] border-l border-[#a8a8a8] bg-[#f7f7f7] rounded-r text-[#555]"><svg class="w-[11px] h-[6px]"><use href="#up"/></svg><svg class="w-[11px] h-[6px] text-[#a8a8a8]"><use href="#down"/></svg></span>
                      </span>
                      <input id="loop" type="checkbox" class="appearance-none size-[21px] ml-[9px] mr-2 border border-[#b8b8b8] bg-white"/><label for="loop">Loop</label>
                    </div>
                    <div class="flex items-center gap-2">
                      <span class="relative flex"><input id="start" type="checkbox" checked class="peer appearance-none size-[21px] border border-[#b8b8b8] bg-white"/><svg class="absolute inset-0 size-[21px] hidden peer-checked:block pointer-events-none"><use href="#check"/></svg></span><label for="start">Start at first result</label>
                    </div>
                  </div>
                </fieldset>

                <fieldset class="w-[500px] h-[181px] border border-[#c0c0c0] rounded-md px-[13px] pt-1">
                  <legend class="px-[6px] pt-1 -ml-[9px] text-[#4a5f96]">Export to file</legend>
                  <div class="flex flex-col gap-[14px]">
                    <div class="flex items-center -mb-px">
                      <input id="res" type="checkbox" class="appearance-none size-[21px] mr-2 border border-[#b8b8b8] bg-white"/><label for="res" class="w-[150px]">Image resolution:</label>
                      <label for="w" class="w-[60px] text-[#8a8a8a]">Width:</label>
                      <span class="flex w-20 h-[30px] border border-[#a8a8a8] rounded bg-[#efefef]">
                        <input id="w" type="number" value="1280" disabled class="w-0 flex-1 pl-1 text-[#8a8a8a] [appearance:textfield]"/>
                        <span class="w-5 flex flex-col items-center justify-center gap-[7px] border-l border-[#a8a8a8] bg-[#f7f7f7] rounded-r text-[#a8a8a8]"><svg class="w-[11px] h-[6px]"><use href="#up"/></svg><svg class="w-[11px] h-[6px]"><use href="#down"/></svg></span>
                      </span>
                      <label for="h" class="w-[73px] pl-[9px] text-[#8a8a8a]">Height:</label>
                      <span class="flex w-20 h-[30px] border border-[#a8a8a8] rounded bg-[#efefef]">
                        <input id="h" type="number" value="720" disabled class="w-0 flex-1 pl-1 text-[#8a8a8a] [appearance:textfield]"/>
                        <span class="w-5 flex flex-col items-center justify-center gap-[7px] border-l border-[#a8a8a8] bg-[#f7f7f7] rounded-r text-[#a8a8a8]"><svg class="w-[11px] h-[6px]"><use href="#up"/></svg><svg class="w-[11px] h-[6px]"><use href="#down"/></svg></span>
                      </span>
                    </div>
                    <div class="flex items-center">
                      <span class="relative flex mr-2"><input id="bg" type="checkbox" checked class="peer appearance-none size-[21px] border border-[#b8b8b8] bg-white"/><svg class="absolute inset-0 size-[21px] hidden peer-checked:block pointer-events-none"><use href="#check"/></svg></span><label for="bg" class="w-[154px]">Background color</label>
                      <span class="relative flex mr-2"><input id="leg" type="checkbox" checked class="peer appearance-none size-[21px] border border-[#b8b8b8] bg-white"/><svg class="absolute inset-0 size-[21px] hidden peer-checked:block pointer-events-none"><use href="#check"/></svg></span><label for="leg">Legend</label>
                    </div>
                    <div class="flex items-center h-[21px]">
                      <input id="mov" type="checkbox" class="appearance-none size-[21px] mr-2 border border-[#b8b8b8] bg-white"/><label for="mov" class="w-[129px]">Save as Movie:</label>
                      <span class="flex items-center w-[212px] h-5 border border-[#b4b4b4] rounded-sm bg-white overflow-hidden pr-2">
                        <input type="text" value="Movie.avi" aria-label="Movie file" class="w-0 flex-1 pl-[2px] h-[22px] pt-[2px]"/><button class="flex" aria-label="Browse movie"><svg class="w-6 h-[18px]"><use href="#open"/></svg></button>
                      </span>
                    </div>
                    <div class="flex items-center h-[21px]">
                      <input id="pic" type="checkbox" class="appearance-none size-[21px] mr-2 border border-[#b8b8b8] bg-white"/><label for="pic" class="w-[148px]">Save as Pictures:</label>
                      <span class="flex items-center w-[212px] h-5 border border-[#b4b4b4] rounded-sm bg-white overflow-hidden pr-2">
                        <input type="text" value="Frame.png" aria-label="Picture file" class="w-0 flex-1 pl-[2px] h-[22px] pt-[2px]"/><button class="flex" aria-label="Browse pictures"><svg class="w-6 h-[18px]"><use href="#open"/></svg></button>
                      </span>
                    </div>
                  </div>
                </fieldset>
              </div>

              <div class="flex items-center">
                <button class="w-20 h-[34px] flex items-center justify-center gap-2 pl-2 border border-[#a8a8a8] rounded bg-linear-to-b from-white to-[#efefef]"><svg class="w-[10px] h-[18px]" viewBox="0 0 10 18"><path d="M1 1v16l8-8z" fill="#ccc" stroke="#555"/></svg>Play</button>
                <button class="w-20 h-[34px] ml-[9px] flex items-center justify-center gap-[6px] border border-[#a8a8a8] rounded bg-linear-to-b from-white to-[#efefef]"><span class="size-[14px] border border-[#444] bg-linear-to-b from-[#aaa] to-[#ddd]"></span>Stop</button>
                <div role="progressbar" aria-valuenow="19" class="relative flex-1 h-7 ml-[26px] border border-[#a8a8a8] rounded-sm bg-white">
                  <div class="absolute -left-px -top-px -bottom-px border border-[#1060a8] rounded-sm bg-linear-to-b from-[#0a90ff] to-[#0074d8]" style="width:19.500%"></div>
                  <div class="relative h-full grid place-items-center">19%</div>
                </div>
              </div>
            </div>
          </div>

          <aside class="w-[373px] shrink-0 flex pt-2 pl-[9px] pr-3 pb-2">
            <fieldset class="flex-1 border border-[#c0c0c0] rounded-md px-[13px] pt-px">
              <legend class="px-[6px] pt-1 -ml-2 text-[#4a5f96]">Parameters</legend>
              <div class="flex items-center">
                <label for="rtype" class="w-[101px]">Result type:</label>
                <span class="relative"><select id="rtype" class="appearance-none w-[107px] h-[27px] pl-[5px] border border-[#a8a8a8] rounded-sm bg-linear-to-b from-[#fcfcfc] to-[#ececec]"><option>freq</option></select><svg class="absolute right-[11px] top-[11px] w-3 h-[6px] text-[#555] pointer-events-none"><use href="#down"/></svg></span>
                <span class="relative ml-[9px]"><select aria-label="Frequency" class="appearance-none w-[107px] h-[27px] pl-[5px] border border-[#a8a8a8] rounded-sm bg-linear-to-b from-[#fcfcfc] to-[#ececec]"><option>400</option></select><svg class="absolute right-[11px] top-[11px] w-3 h-[6px] text-[#555] pointer-events-none"><use href="#down"/></svg></span>
              </div>
              <div class="flex items-center mt-[9px]">
                <label for="lc" class="w-[110px]">Loadcase ID:</label>
                <span class="relative"><select id="lc" class="appearance-none w-[107px] h-[27px] pl-[5px] border border-[#a8a8a8] rounded-sm bg-linear-to-b from-[#fcfcfc] to-[#ececec]"><option>1</option></select><svg class="absolute right-[11px] top-[11px] w-3 h-[6px] text-[#555] pointer-events-none"><use href="#down"/></svg></span>
              </div>
            </fieldset>
          </aside>
        </div>
      </main>
    </div>
  </div>
</div>

<!-- desktop taskbar -->
<footer class="h-4 shrink-0 overflow-hidden flex items-start bg-linear-to-r from-[#cdd7dc] via-[#d6dadc] to-[#cfdae0] border-t border-[#c4c4c4]">
  <div class="w-[512px] h-4 mt-[2px] ml-[74px] bg-white border-l border-[#bbb]"></div>
  <div class="w-[31px] h-4 mt-3 ml-[171px] rounded bg-white"></div>
  <div class="size-6 mt-[11px] ml-12 rounded-full bg-[#35b4cc]"></div>
  <div class="w-[73px] h-4 ml-[27px] flex justify-center bg-[#ebeff1]"><span class="w-9 h-5 mt-3 border border-[#f08c3c]"></span></div>
  <div class="flex-1"></div>
  <div class="mt-[6px] mr-[180px] text-[20px] leading-5 font-['Liberation_Serif',serif]">18:12</div>
  <div class="w-[2px] h-4 mr-[5px] bg-[#a8b0b4]"></div>
</footer>

<script>
// guides: one char per level. | line, t tee, l corner, + - expander, space none
const G='bg-[#cfe8cc]',B='bg-[#ccdce8]',P='bg-[#cccce8]',Y='bg-[#e6e4cc]',V='bg-[#cce6e0]';
const ROWS=[
  ['-','blocks','Topologies',G,1],
  ['|-','blocks','TOPOLOGY_koushao.cas 1',G,1],
  ['| +','mesh','Mesh',G,1],
  ['| -','box','Domains',G,1],
  ['| |+','boxred','All_1',G,1],
  ['| |+','box','mesher_input4',G,1],
  ['| |+','box','SkinFiniteDomain3',G,1],
  ['| |+','box','FiniteDomain2',G,1],
  ['| l','puzzle','Partitions',G,0],
  ['-','package','Materials',B,0],
  ['|+','sphere','air 1',B,0],
  ['t','table','Tables',P,0],
  ['-','clip','Analysis',Y,0],
  ['|-','clip','Direct Frequency Response 1',Y,1,1],
  ['||-','gear','Components',Y,0],
  ['|||+','gearblue','acoustic 1',Y,1],
  ['|||+','gearblue','infinite_acoustic 2',Y,1],
  ['||t','conn','Connectors',Y,0],
  ['||-','bc','Boundary Conditions',Y,0],
  ['|||+','light','lighthill_volume 1',Y,1],
  ['||t','load','Loadcases',Y,0],
  ['||-','post','PostProcessing',Y,0],
  ['|||+','map','Output Map 1',Y,1],
  ['||-','field','Field Data List',Y,0],
  ['|| l','field','Field 1',Y,0],
  ['|-','clip','ICFD 2',Y,1,1],
  ['| t','post','PostProcessing',Y,0],
  ['| t','caa','Caasources',Y,0],
  ['| l','dft','DFT',Y,0],
  ['-','wheel','Visual',V,0],
  [' +','monitor','viewport 1',V,0]
];
const BOX='<path d="M12.500 0v21M12.500 10.500h8" stroke="#999"/><rect x="8.500" y="6.500" width="8" height="8" rx="1" fill="#fff" stroke="#8a8a8a"/>';
const GUIDE={
  '|':'<path d="M12.500 1v19" stroke="#999"/>',
  't':'<path d="M12.500 1v19M12.500 10.500h8" stroke="#999"/>',
  'l':'<path d="M12.500 0v10.500h8" fill="none" stroke="#999"/>',
  '-':BOX+'<path d="M10 10.500h5" stroke="#000"/>',
  '+':BOX+'<path d="M10 10.500h5M12.500 8v5" stroke="#000"/>',
  ' ':''
};
const MARKS='<svg class="w-12 h-[21px]" viewBox="0 0 48 21"><circle cx="9" cy="10.500" r="5" fill="url(#gCyan)" stroke="#5cb8cc" stroke-width=".6"/><path d="M21 8l3-3h8v8l-3 3h-8z" fill="#3ea8cc"/><path d="M21 8l3-3h8l-3 3zM32 5v8l-3 3V8z" fill="#1c7494"/><path d="M35 5h12v12H35z" fill="#dfdedd"/></svg>';
document.getElementById('tree').innerHTML=ROWS.map(([g,icon,name,color,marks,u],i)=>{
  const cells=[...g].map(c=>`<svg class="w-[26px] h-[21px] ${c===' '?'bg-white':''}" viewBox="0 0 26 21">${GUIDE[c]}</svg>`).join('');
  return `<li class="flex h-[21px] ${i%2?'bg-[#e7e5e2]':'bg-white'}">${marks?MARKS:'<span class="w-12"></span>'}${cells}
  <span class="flex-1 flex items-center gap-[6px] pl-[3px] whitespace-nowrap ${color}"><svg class="size-4"><use href="#${icon}"/></svg><span class="${u?'underline underline-offset-2':''}">${name}</span></span></li>`;
}).join('');
</script>
</body>
</html>
